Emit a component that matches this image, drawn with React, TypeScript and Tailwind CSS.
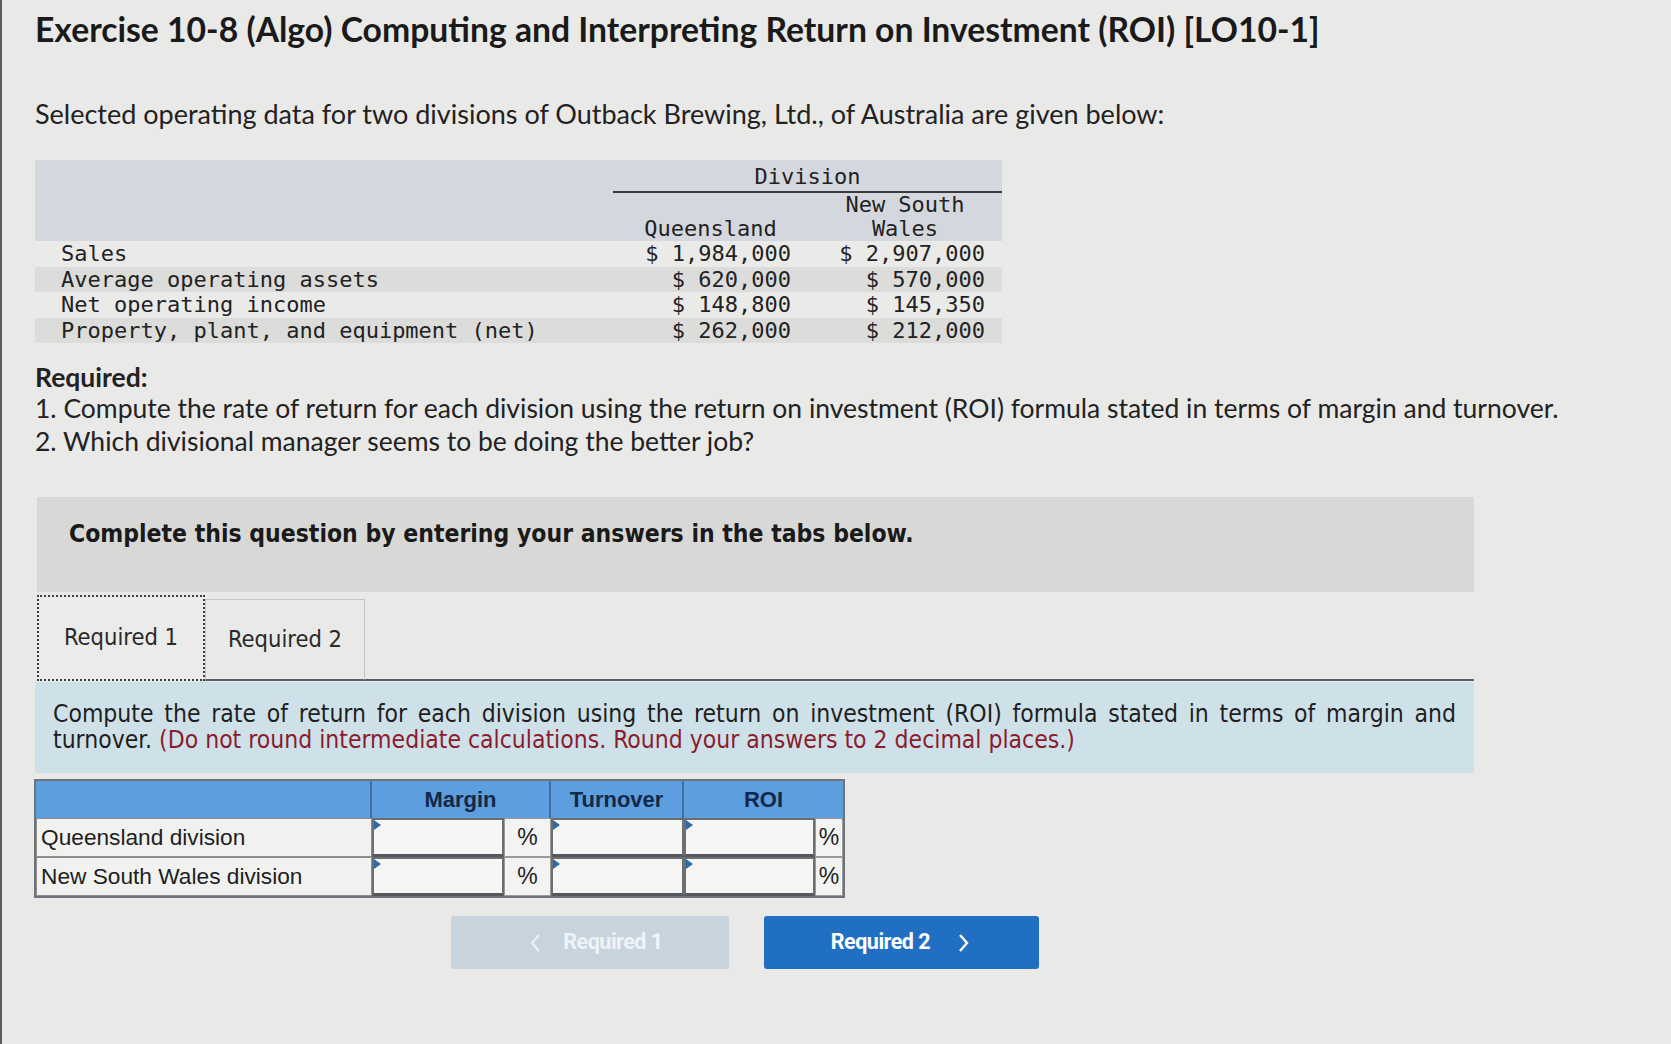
import React from "react";

const rows = [
  { label: "Sales", q: "$ 1,984,000", n: "$ 2,907,000" },
  { label: "Average operating assets", q: "$ 620,000", n: "$ 570,000" },
  { label: "Net operating income", q: "$ 148,800", n: "$ 145,350" },
  { label: "Property, plant, and equipment (net)", q: "$ 262,000", n: "$ 212,000" },
];

function InputCell() {
  return (
    <div className="relative bg-[#f6f6f5] border-[2px] border-[#6b6f73] border-b-[3px] border-b-[#55595d]">
      <div className="absolute top-0 left-0 w-0 h-0 border-y-[5px] border-y-transparent border-l-[7px] border-l-[#2f6aa6]" />
    </div>
  );
}

function PctCell() {
  return (
    <div className="flex items-center justify-center bg-[#f3f3f2] border border-[#9a9a9a] text-[23px]">%</div>
  );
}

export default function App() {
  return (
    <div className="w-[1671px] h-[1044px] bg-[#e9e9e7] border-l-2 border-[#5c5c5c] overflow-hidden text-[#1e1e1e]">
      <div className="pl-[33px] pt-[10px]">
        <h1 className="font-['Lato'] font-bold text-[33.7px] leading-[38px] text-[#1a1a1a]">
          Exercise 10-8 (Algo) Computing and Interpreting Return on Investment (ROI) [LO10-1]
        </h1>
        <p className="mt-[50px] font-['Lato'] text-[27px] leading-[31px] text-[#222]">
          Selected operating data for two divisions of Outback Brewing, Ltd., of Australia are given below:
        </p>

        {/* data table */}
        <div className="mt-[31px] w-[967px] font-['DejaVu_Sans_Mono'] text-[22px] text-[#222]">
          <div className="grid grid-cols-[578px_389px] bg-[#d4d8de] pt-[4px]">
            <div />
            <div>
              <div className="text-center leading-[25px] border-b-2 border-[#3a3a3a] pb-[2px]">Division</div>
              <div className="grid grid-cols-[195px_194px] leading-[24px]">
                <div className="flex items-end justify-center">Queensland</div>
                <div className="text-center">
                  New South
                  <br />
                  Wales
                </div>
              </div>
            </div>
          </div>
          {rows.map((r, i) => (
            <div
              key={r.label}
              className={`grid grid-cols-[578px_195px_194px] leading-[25.5px] whitespace-pre ${
                i % 2 === 1 ? "bg-[#dcdcdb]" : "bg-[#eaeae8]"
              }`}
            >
              <div className="pl-[26px]">{r.label}</div>
              <div className="text-right pr-[17px]">{r.q}</div>
              <div className="text-right pr-[17px]">{r.n}</div>
            </div>
          ))}
        </div>

        {/* required */}
        <div className="mt-[19px] font-['Lato'] text-[26.5px] leading-[31px] text-[#222]">
          <div className="font-bold">Required:</div>
          <div>1. Compute the rate of return for each division using the return on investment (ROI) formula stated in terms of margin and turnover.</div>
          <div className="mt-[2px]">2. Which divisional manager seems to be doing the better job?</div>
        </div>

        {/* instructions box */}
        <div className="mt-[40px] ml-[2px] w-[1437px] h-[95px] bg-[#d8d8d6] pl-[32px] pt-[24px]">
          <div className="font-['DejaVu_Sans_Condensed','Liberation_Sans',sans-serif] font-bold text-[24.5px] leading-[26px] text-[#1a1a1a]">
            Complete this question by entering your answers in the tabs below.
          </div>
        </div>

        {/* tabs */}
        <div className="mt-[3px] ml-[2px] w-[1437px] flex items-end font-['DejaVu_Sans_Condensed','Liberation_Sans',sans-serif] text-[23.5px] text-[#2a2a2a]">
          <div className="w-[168px] h-[86px] border-2 border-dotted border-[#3f3f3f] flex items-center justify-center bg-[#ebebe9]">
            Required 1
          </div>
          <div className="w-[160px] h-[82px] border border-[#c4c4c4] border-b-2 border-b-[#56606a] flex items-center justify-center bg-[#e9e9e7] pt-[1px]">
            Required 2
          </div>
          <div className="flex-1 border-b-2 border-[#56606a]" />
        </div>

        {/* blue instructions */}
        <div className="mt-[1px] w-[1439px] bg-[#cfe1e8] pt-[19px] pb-[20px] px-[18px] font-['DejaVu_Sans_Condensed','Liberation_Sans',sans-serif] text-[24.5px] leading-[26px] text-[#1e1e1e] text-justify">
          <span>Compute the rate of return for each division using the return on investment (ROI) formula stated in terms of margin and</span>{" "}
          <span>turnover.</span>{" "}
          <span className="text-[#8a1c2e]">(Do not round intermediate calculations. Round your answers to 2 decimal places.)</span>
        </div>

        {/* answer table */}
        <div className="mt-[6px] -ml-[1px] w-[811px] font-['Liberation_Sans'] border-2 border-[#6f7478]">
          <div className="grid grid-cols-[336px_179px_133px_159px] h-[37px] bg-[#5c9ede] text-[#14284a] font-bold text-[22px]">
            <div className="border-r-2 border-[#3f6f9c]" />
            <div className="flex items-center justify-center border-r-2 border-[#3f6f9c]">Margin</div>
            <div className="flex items-center justify-center border-r-2 border-[#3f6f9c]">Turnover</div>
            <div className="flex items-center justify-center">ROI</div>
          </div>
          {["Queensland division", "New South Wales division"].map((l) => (
            <div key={l} className="grid grid-cols-[336px_132px_47px_133px_131px_28px] h-[39px] text-[22.7px] text-[#1e1e1e]">
              <div className="flex items-center pl-[4px] bg-[#f1f1f0] border border-[#8d8d8d]">{l}</div>
              <InputCell />
              <PctCell />
              <InputCell />
              <InputCell />
              <PctCell />
            </div>
          ))}
        </div>

        {/* buttons */}
        <div className="mt-[18px] ml-[416px] flex gap-[35px] font-['Roboto'] font-bold text-[21.5px] tracking-[-0.5px]">
          <div className="w-[278px] h-[53px] rounded-[3px] bg-[#c8d4dd] text-[#eef3f7] flex items-center justify-center gap-[22px] pl-[12px]">
            <svg width="12" height="20" viewBox="0 0 12 20" fill="none" stroke="#eef3f7" strokeWidth="2">
              <path d="M10 2 L3 10 L10 18" />
            </svg>
            <span>Required 1</span>
          </div>
          <div className="w-[275px] h-[53px] rounded-[3px] bg-[#216fc2] text-white flex items-center justify-center gap-[28px] pr-[2px]">
            <span>Required 2</span>
            <svg width="12" height="20" viewBox="0 0 12 20" fill="none" stroke="#ffffff" strokeWidth="2.4">
              <path d="M2 2 L9 10 L2 18" />
            </svg>
          </div>
        </div>
      </div>
    </div>
  );
}
